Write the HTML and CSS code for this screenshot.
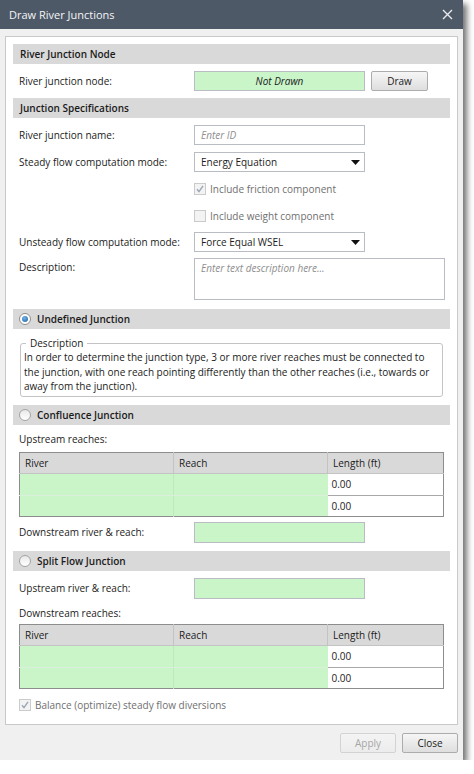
FILE: index.html
```html
<!DOCTYPE html>
<html>
<head>
<meta charset="utf-8">
<title>Draw River Junctions</title>
<link rel="stylesheet" href="styles.css">
</head>
<body>
<div class="window">
  <div class="titlebar">
    <span class="title">Draw River Junctions</span>
    <svg class="close" width="11" height="11" viewBox="0 0 11 11"><path d="M1 1 L10 10 M10 1 L1 10" stroke="#e8eaed" stroke-width="1.4" fill="none"/></svg>
  </div>
  <div class="client">
    <div class="panel">
      <div class="section-header">River Junction Node</div>
      <div class="row r-node">
        <span class="label">River junction node:</span>
        <div class="field green center italic">Not Drawn</div>
        <button class="btn btn-draw">Draw</button>
      </div>

      <div class="section-header">Junction Specifications</div>
      <div class="row">
        <span class="label">River junction name:</span>
        <div class="field placeholder">Enter ID</div>
      </div>
      <div class="row">
        <span class="label">Steady flow computation mode:</span>
        <div class="field select">Energy Equation<svg class="caret" width="9" height="5" viewBox="0 0 9 5"><path d="M0 0 H9 L4.5 5 Z" fill="#111"/></svg></div>
      </div>
      <div class="row check-row">
        <span class="label"></span>
        <span class="checkbox"><svg width="10" height="10" viewBox="0 0 10 10"><path d="M2 5.2 L4 7.6 L8 1.8" stroke="#9aa6b6" stroke-width="1.4" fill="none"/></svg></span>
        <span class="check-text">Include friction component</span>
      </div>
      <div class="row check-row">
        <span class="label"></span>
        <span class="checkbox"></span>
        <span class="check-text">Include weight component</span>
      </div>
      <div class="row r-unsteady">
        <span class="label">Unsteady flow computation mode:</span>
        <div class="field select">Force Equal WSEL<svg class="caret" width="9" height="5" viewBox="0 0 9 5"><path d="M0 0 H9 L4.5 5 Z" fill="#111"/></svg></div>
      </div>
      <div class="row r-desc">
        <span class="label">Description:</span>
        <div class="field textarea placeholder">Enter text description here...</div>
      </div>

      <div class="section-header radio-header h-undefined">
        <span class="radio selected"><span class="dot"></span></span>Undefined Junction
      </div>
      <fieldset class="group">
        <legend>Description</legend>
        <p>In order to determine the junction type, 3 or more river reaches must be connected to the junction, with one reach pointing differently than the other reaches (i.e., towards or away from the junction).</p>
      </fieldset>

      <div class="section-header radio-header h-confluence">
        <span class="radio"></span>Confluence Junction
      </div>
      <div class="sub-label l-upstream">Upstream reaches:</div>
      <table class="grid t-upstream">
        <thead><tr><th>River</th><th>Reach</th><th>Length (ft)</th></tr></thead>
        <tbody>
          <tr><td class="g"></td><td class="g"></td><td class="num">0.00</td></tr>
          <tr><td class="g"></td><td class="g"></td><td class="num">0.00</td></tr>
        </tbody>
      </table>
      <div class="row r-downstream">
        <span class="label">Downstream river &amp; reach:</span>
        <div class="field green tall"></div>
      </div>

      <div class="section-header radio-header h-split">
        <span class="radio"></span>Split Flow Junction
      </div>
      <div class="row r-upriver">
        <span class="label">Upstream river &amp; reach:</span>
        <div class="field green tall"></div>
      </div>
      <div class="sub-label l-downstream">Downstream reaches:</div>
      <table class="grid t-downstream">
        <thead><tr><th>River</th><th>Reach</th><th>Length (ft)</th></tr></thead>
        <tbody>
          <tr><td class="g"></td><td class="g"></td><td class="num">0.00</td></tr>
          <tr><td class="g"></td><td class="g"></td><td class="num">0.00</td></tr>
        </tbody>
      </table>
      <div class="row balance-row">
        <span class="checkbox"><svg width="10" height="10" viewBox="0 0 10 10"><path d="M2 5.2 L4 7.6 L8 1.8" stroke="#9aa6b6" stroke-width="1.4" fill="none"/></svg></span>
        <span class="check-text">Balance (optimize) steady flow diversions</span>
      </div>
    </div>
  </div>
  <div class="footer">
    <button class="btn btn-foot disabled">Apply</button>
    <button class="btn btn-foot">Close</button>
  </div>
</div>
</body>
</html>
```
FILE: styles.css
```css
* { box-sizing: border-box; }
html, body { margin: 0; padding: 0; background: #ffffff; }
body {
  font-family: "Open Sans", "Liberation Sans", sans-serif;
  font-size: 10px;
  color: #1b1b1b;
}
.window {
  width: 463px;
  height: 760px;
  background: #f0f0f0;
  display: flex;
  flex-direction: column;
  box-shadow: 4px 4px 6px rgba(0,0,0,0.55);
}
.titlebar {
  height: 29px;
  background: #4e5968;
  display: flex;
  align-items: center;
  justify-content: space-between;
  padding: 0 10px 0 9px;
}
.title {
  color: #f4f5f7;
  font-size: 11px;
}
.client {
  padding: 7px 5px 0 5px;
}
.panel {
  background: #ffffff;
  border: 1px solid #c9c9c9;
  height: 689px;
  padding: 7px 7px 0 7px;
}
.section-header {
  height: 20px;
  background: #d9d9d9;
  font-weight: 600;
  padding-left: 7px;
  display: flex;
  align-items: center;
  margin-top: 7px;
}
.panel > .section-header:first-child { margin-top: 0; }
.row {
  display: flex;
  align-items: center;
  height: 20px;
  margin-top: 7px;
}
.label {
  width: 181px;
  flex: none;
  padding-left: 6px;
}
.field {
  width: 171px;
  height: 20px;
  border: 1px solid #b9bcc2;
  background: #fff;
  display: flex;
  align-items: center;
  padding-left: 6px;
  flex: none;
}
.field.tall { height: 21px; }
.field.green { background: #c9f5c9; }
.field.center { justify-content: center; padding-left: 0; }
.italic { font-style: italic; }
.placeholder { color: #8e8e8e; font-style: italic; }
.select { justify-content: space-between; padding-right: 4px; }
.caret { display: block; }
.btn {
  font-family: inherit;
  font-size: 10px;
  color: #1b1b1b;
  height: 20px;
  border: 1px solid #acacac;
  border-radius: 2px;
  background: linear-gradient(#f6f6f6, #dedede);
  padding: 0;
}
.btn-draw { width: 57px; margin-left: 6px; }
.check-row { margin-top: 7px; }
.checkbox {
  width: 12px;
  height: 12px;
  border: 1px solid #cbcbcb;
  background: #f3f3f3;
  display: flex;
  align-items: center;
  justify-content: center;
  flex: none;
}
.check-text { color: #6f6f6f; margin-left: 4px; }
.r-unsteady { margin-top: 6px; }
.r-desc { height: 42px; align-items: flex-start; margin-top: 6px; }
.r-desc .label { padding-top: 2px; }
.textarea { width: 251px; height: 42px; align-items: flex-start; padding-top: 2px; }
.h-undefined { margin-top: 9px; }
.radio-header { padding-left: 6px; }
.radio {
  width: 12px;
  height: 12px;
  border-radius: 50%;
  border: 1px solid #a4a4a4;
  background: linear-gradient(#e9e9e9, #ffffff);
  margin-right: 6px;
  display: flex;
  align-items: center;
  justify-content: center;
}
.radio.selected { background: #fff; border-color: #8d8d8d; }
.dot {
  width: 6px;
  height: 6px;
  border-radius: 50%;
  background: radial-gradient(circle at 40% 35%, #6fb3ea, #1f5f9c);
}
.group {
  margin: 7px 7px 0 7px;
  border: 1px solid #c4c4c4;
  border-radius: 3px;
  padding: 0 3px 2px 3px;
}
.group legend {
  padding: 0 4px;
  margin-left: 2px;
  line-height: 14px;
}
.group p {
  margin: 0;
  line-height: 14.5px;
}
.h-confluence, .h-split { margin-top: 8px; }
.sub-label {
  height: 14px;
  line-height: 14px;
  padding-left: 6px;
  margin-top: 7px;
}
.grid {
  margin: 6px 6px 0 6px;
  width: 425px;
  border-collapse: collapse;
  border: 1px solid #8d8d8d;
  table-layout: fixed;
}
.grid th {
  height: 21px;
  background: #d9d9d9;
  font-weight: 400;
  text-align: left;
  padding: 0 0 0 5px;
  border-left: 1px solid #c3c3c3;
  border-bottom: 1px solid #c3c3c3;
}
.grid th:first-child { border-left: none; }
.grid th:nth-child(1), .grid th:nth-child(2) { width: 154px; }
.grid td {
  height: 22px;
  padding: 0 0 0 4px;
}
.grid tr:last-child td { height: 21px; }
.grid td.g { background: #c9f5c9; border-left: 1px solid #bde9bd; }
.grid td.g:first-child { border-left: none; }
.grid tbody tr:first-child td { border-bottom: 1px solid #dcefdc; }
.grid tbody tr:first-child td.num { border-bottom: 1px solid #a8a8a8; }
.grid td.num { background: #fff; }
.r-downstream { height: 21px; margin-top: 5px; }
.h-split { margin-top: 8px; }
.r-upriver { height: 21px; margin-top: 7px; }
.l-downstream { margin-top: 7px; }
.t-downstream { margin-top: 4px; }
.balance-row { padding-left: 6px; margin-top: 6px; }
.balance-row .check-text { margin-left: 4px; }
.footer {
  flex: 1;
  display: flex;
  justify-content: flex-end;
  align-items: flex-start;
  gap: 6px;
  padding: 8px 5px 0 0;
}
.btn-foot { width: 56px; }
.btn.disabled {
  color: #a6a6a6;
  border-color: #d3d3d3;
  background: linear-gradient(#f4f4f4, #ececec);
}
```
